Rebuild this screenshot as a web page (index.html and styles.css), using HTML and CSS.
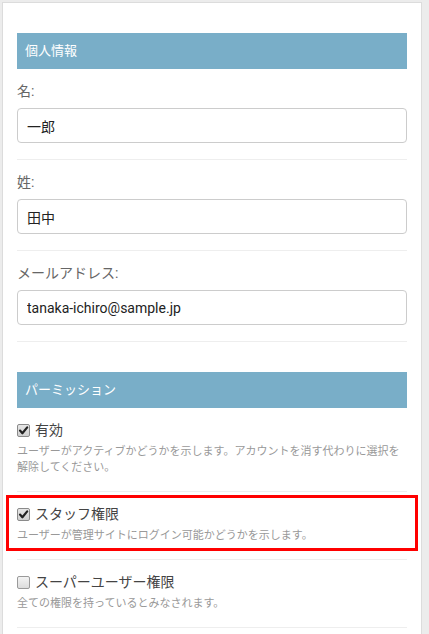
FILE: index.html
```html
<!DOCTYPE html>
<html lang="ja">
<head>
<meta charset="utf-8">
<title>ユーザーを変更</title>
<link rel="stylesheet" href="styles.css">
</head>
<body>
<div class="card">
  <fieldset class="module">
    <h2 class="module-title">個人情報</h2>
    <div class="form-row">
      <label class="field-label" for="first_name">名:</label>
      <input class="text-input" id="first_name" type="text" value="一郎">
    </div>
    <div class="form-row">
      <label class="field-label" for="last_name">姓:</label>
      <input class="text-input" id="last_name" type="text" value="田中">
    </div>
    <div class="form-row">
      <label class="field-label" for="email">メールアドレス:</label>
      <input class="text-input" id="email" type="text" value="tanaka-ichiro@sample.jp">
    </div>
  </fieldset>

  <fieldset class="module">
    <h2 class="module-title">パーミッション</h2>
    <div class="check-row">
      <div class="check-line">
        <span class="cb checked"><svg viewBox="0 0 13 13" width="13" height="13"><path d="M3 6.6 L5.4 9.3 L10.2 3.4" fill="none" stroke="#222" stroke-width="2.2" stroke-linecap="round" stroke-linejoin="round"/></svg></span>
        <span class="check-label">有効</span>
      </div>
      <div class="help">ユーザーがアクティブかどうかを示します。アカウントを消す代わりに選択を解除してください。</div>
    </div>
    <div class="check-row highlighted">
      <div class="check-line">
        <span class="cb checked"><svg viewBox="0 0 13 13" width="13" height="13"><path d="M3 6.6 L5.4 9.3 L10.2 3.4" fill="none" stroke="#222" stroke-width="2.2" stroke-linecap="round" stroke-linejoin="round"/></svg></span>
        <span class="check-label">スタッフ権限</span>
      </div>
      <div class="help">ユーザーが管理サイトにログイン可能かどうかを示します。</div>
      <div class="highlight-box"></div>
    </div>
    <div class="check-row">
      <div class="check-line">
        <span class="cb"></span>
        <span class="check-label">スーパーユーザー権限</span>
      </div>
      <div class="help">全ての権限を持っているとみなされます。</div>
    </div>
  </fieldset>
</div>
</body>
</html>
```

FILE: styles.css
```css
html, body {
  margin: 0;
  padding: 0;
}
body {
  background: #ececec;
  padding: 2px 0 0 2px;
  font-family: Roboto, "Noto Sans CJK JP", sans-serif;
  color: #333;
  overflow: hidden;
  height: 632px;
}
.card {
  box-sizing: border-box;
  width: 420px;
  height: 632px;
  background: #fff;
  border: 1px solid #dcdcdc;
  border-bottom: 0;
  padding: 30px 14px 0;
  overflow: hidden;
}
.module {
  border: 0;
  margin: 0 0 30px;
  padding: 0;
  min-width: 0;
}
.module-title {
  margin: 0;
  height: 36px;
  line-height: 36px;
  padding: 0 8px;
  background: #79aec8;
  color: #fff;
  font-size: 13px;
  font-weight: 400;
}
.form-row {
  padding: 10px 0 16px;
  border-bottom: 1px solid #eee;
}
.field-label {
  display: block;
  font-size: 14px;
  line-height: 24px;
  color: #666;
  margin-bottom: 5px;
}
.text-input {
  display: block;
  box-sizing: border-box;
  width: 100%;
  height: 35px;
  margin: 0;
  border: 1px solid #ccc;
  border-radius: 4px;
  padding: 0 9px;
  font-family: Roboto, "Noto Sans CJK JP", sans-serif;
  font-size: 14px;
  color: #222;
  background: #fff;
}
.check-row {
  position: relative;
  padding: 10px 0 15px;
  border-bottom: 1px solid #eee;
}
.check-line {
  display: flex;
  align-items: center;
  height: 24px;
}
.cb {
  box-sizing: border-box;
  width: 13px;
  height: 13px;
  border: 1px solid #9a9a9a;
  border-radius: 2px;
  background: linear-gradient(#f4f4f4, #dcdcdc);
  margin-right: 5px;
  display: flex;
  align-items: center;
  justify-content: center;
  overflow: hidden;
}
.cb svg {
  display: block;
  flex: none;
}
.cb.checked {
  background: linear-gradient(#e6e6e6, #cfcfcf);
  border-color: #8a8a8a;
}
.check-label {
  font-size: 14px;
  line-height: 24px;
  color: #444;
}
.help {
  margin-top: 2px;
  font-size: 11px;
  line-height: 16px;
  color: #999;
}
.highlight-box {
  position: absolute;
  top: 3px;
  left: -11px;
  width: 412px;
  height: 56px;
  box-sizing: border-box;
  border: 3px solid #f00;
  pointer-events: none;
}
```
